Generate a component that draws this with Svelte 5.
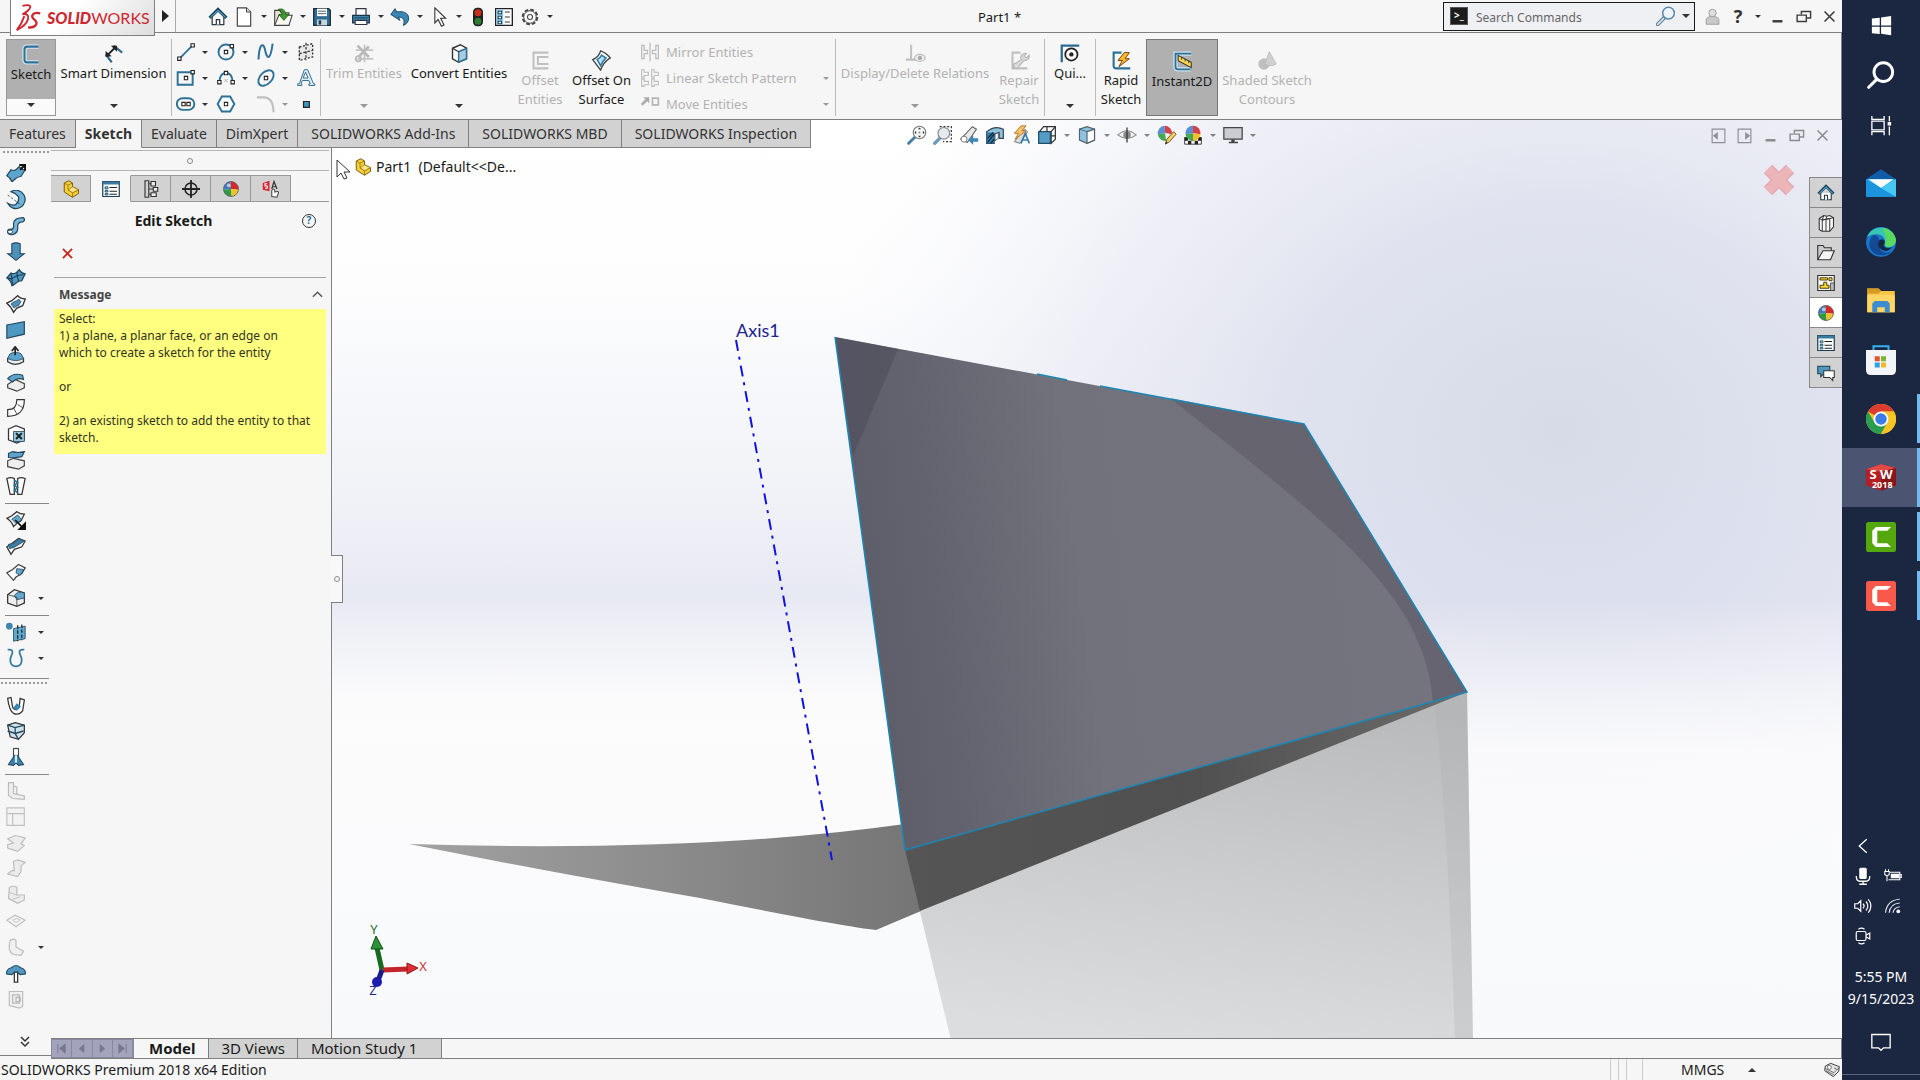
<script>
  const icons = {
    home: '<path d="M5 12v9h14v-9" fill="#fff" stroke="#2b3a44" stroke-width="1.5"/><path d="M10 21v-6h4v6" fill="#fff" stroke="#2b3a44" stroke-width="1.5"/><path d="M2 13 12 3l10 10" fill="none" stroke="#1c4257" stroke-width="4"/><path d="M3 12.500 12 4l9 8.500" fill="none" stroke="#4d9bc4" stroke-width="1.500"/>',
    doc: '<path d="M4 1h11l5 5v17H4z" fill="#fff" stroke="#444" stroke-width="1.4"/><path d="M15 1v5h5" fill="#ddd" stroke="#444" stroke-width="1.2"/>',
    open: '<path d="M2 22V4h6l2 3h9v15z" fill="#e6e3d3" stroke="#444" stroke-width="1.3"/><path d="M2 22 7 10h16l-4 12z" fill="#fbfaf2" stroke="#444" stroke-width="1.3"/><path d="M6 3c6-2 9 1 9 6h4l-6 7-6-7h4c0-3-1-5-5-6z" fill="#3d9a2f" stroke="#1f5c18"/>',
    save: '<path d="M2 2h18l2 2v18H2z" fill="#2f6a90" stroke="#1b2b38" stroke-width="1.5"/><path d="M6 2h12v9H6z" fill="#fff"/><path d="M7 5h10M7 8h10" stroke="#345" /><path d="M6 15h12v7H6z" fill="#c8d4dc"/><path d="M8 16h3v5H8z" fill="#1c3546"/>',
    print: '<path d="M6 10V2h12v8" fill="#fff" stroke="#334" stroke-width="1.400"/><path d="M2 10h20v9H2z" fill="#3f85ab" stroke="#183648" stroke-width="1.5"/><path d="M5 16h14v5H5z" fill="#fff" stroke="#334" stroke-width="1.300"/><path d="M4 13h16" stroke="#183648"/>',
    undo: '<path d="m1 9 5-7 2 4c10-2 16 3 14 10-1 3-3 5-6 6 2-5 1-10-6-10l2 4z" fill="#3a86b4" stroke="#1b4a67" stroke-width="1.2"/>',
    cursor: '<path d="M7 1v18l4-4 4 8 3-1.500-4-8h6z" fill="#fff" stroke="#333" stroke-width="1.3"/>',
    light: '<rect x="6" y="1" width="12" height="22" rx="5" fill="#222"/><circle cx="12" cy="7" r="4.200" fill="#c8301d"/><circle cx="12" cy="17" r="4.200" fill="#2e7d32"/>',
    props: '<path d="M2 2h20v20H2z" fill="#fff" stroke="#222" stroke-width="1.6"/><path d="M3 3h8v18H3z" fill="#8fc4e0"/><path d="M5 5h4v3H5zM5 11h4v3H5zM5 17h4v3H5z" fill="#fff" stroke="#1c4963" stroke-width="1.300"/><path d="M13 6h6M13 12h6M13 18h6" stroke="#333" stroke-width="1.4"/>',
    gear: '<circle cx="12" cy="12" r="8.500" fill="none" stroke="#444" stroke-width="3" stroke-dasharray="4.400 2.270"/><circle cx="12" cy="12" r="7.500" fill="#f8f8f8" stroke="#555" stroke-width="1.200"/><circle cx="12" cy="12" r="3" fill="#fff" stroke="#444" stroke-width="1.3"/>',
    user: '<path d="M3 23v-6q0-5 9-5t9 5v6z" fill="#c9c9c9" stroke="#8a8a8a"/><circle cx="12" cy="7" r="5.300" fill="#ddd" stroke="#8a8a8a"/>',
    min: '<path d="M5 17h14v3.500H5z" fill="#3c3c3c"/>',
    restore: '<path d="M9 9V5h13v9h-5" fill="none" stroke="#3c3c3c" stroke-width="2"/><path d="M3 10h13v9H3z" fill="none" stroke="#3c3c3c" stroke-width="2"/>',
    close: '<path d="m5 5 14 14M19 5 5 19" stroke="#3c3c3c" stroke-width="2.200"/>',
    left: '<path d="M3 3h18v19H3z" fill="none" stroke="#444" stroke-width="1.600"/><path d="M11 7v11l-7-5.500z" fill="#444"/>',
    right: '<path d="M3 3h18v19H3z" fill="none" stroke="#444" stroke-width="1.600"/><path d="M13 7v11l7-5.500z" fill="#444"/>',
    mag: '<path d="m10 14-8 8" stroke="#5c7f98" stroke-width="4.500" stroke-linecap="round"/><path d="m9 15-7 7" stroke="#dce8f0" stroke-width="2" stroke-linecap="round"/><circle cx="15" cy="8.500" r="7" fill="#edf5fb" stroke="#5c87a6" stroke-width="1.800"/>',
    sketch: '<path d="M20 3H7Q4 3 4 6v12q0 3 3 3h13" fill="none" stroke="#d6e6ef" stroke-width="5"/><path d="M20 3H7Q4 3 4 6v12q0 3 3 3h13" fill="none" stroke="#2d7197" stroke-width="2.300"/>',
    dimension: '<path d="m3 13 7 9M12 3l10 8" stroke="#2d6c90" stroke-width="2.400" fill="none"/><path d="m6 13 7-7" stroke="#222" stroke-width="2.200"/><path d="M3 9v7l7-1zM9 3h7v7z" fill="#222"/>',
    line: '<path d="M5 19 19 5" stroke="#2d7197" stroke-width="2.200"/><path d="M2 18h4v4H2zM18 2h4v4h-4z" fill="#fff" stroke="#222" stroke-width="1.300"/>',
    circle: '<circle cx="12" cy="12" r="9" fill="none" stroke="#2d7197" stroke-width="2.300"/><path d="M10 10h4v4h-4zM17 3h4v4h-4z" fill="#fff" stroke="#222" stroke-width="1.300"/>',
    spline: '<path d="M3 21C4 1 9 0 11 10s6 14 9-8" fill="none" stroke="#2d7197" stroke-width="2.400"/>',
    plane: '<path d="m4 6 16-4v16L4 22z" fill="#e8e8e8" stroke="#333" stroke-width="1.600" stroke-dasharray="2.500 2"/><path d="M12 1v21M4 14l16-4" stroke="#333" stroke-width="1.500" stroke-dasharray="3 2"/>',
    rect: '<path d="M2 5h18v15H2z" fill="none" stroke="#2d7197" stroke-width="2.300"/><path d="M10 10h4v4h-4zM18 3h4v4h-4z" fill="#fff" stroke="#222" stroke-width="1.300"/>',
    arc: '<path d="M4 16q1-10 8-10t8 10" fill="none" stroke="#2d7197" stroke-width="2.300"/><path d="M2 15h4v4H2zM18 15h4v4h-4zM10 4h4v4h-4z" fill="#fff" stroke="#222" stroke-width="1.300"/><path d="m10 13 4 4M14 13l-4 4" stroke="#aaa"/>',
    ellipse: '<ellipse cx="12" cy="12" rx="11" ry="7" transform="rotate(-45 12 12)" fill="none" stroke="#2d7197" stroke-width="2.300"/><path d="M10 10h4v4h-4z" fill="#fff" stroke="#222" stroke-width="1.300"/>',
    letter: '<path d="M2 21h5v-2H6l1.500-4h8l1.500 4h-1.500v2h7v-2h-1.500L14 2h-4L4 19H2zM8.500 12l3-7 3 7z" fill="#dcecf5" stroke="#3b7191" stroke-width="1.200" fill-rule="evenodd"/>',
    slot: '<rect x="1" y="5" width="21" height="14" rx="7" fill="none" stroke="#2d7197" stroke-width="2.300"/><path d="M7 10h4v4H7zM13 10h4v4h-4z" fill="#fff" stroke="#222" stroke-width="1.300"/>',
    hexagon: '<path d="m7 3-5 9 5 9h10l5-9-5-9z" fill="#fff" stroke="#2d7197" stroke-width="2.300"/><path d="M10 10h4v4h-4z" fill="#fff" stroke="#222" stroke-width="1.300"/>',
    fillet: '<path d="M1 4h8q12 0 12 18" fill="none" stroke="#c0c0c0" stroke-width="2.500"/>',
    point: '<path d="M9 9h7v7H9z" fill="#3f94c0" stroke="#222" stroke-width="1.400"/>',
    trim: '<path d="M12 2v20M2 8h20M4 18h18" stroke="#c4c4c4" stroke-width="2"/><path d="m4 3 13 13M5 16 17 4" stroke="#b8b8b8" stroke-width="3"/><circle cx="5" cy="18" r="3" fill="none" stroke="#bbb" stroke-width="2"/>',
    convert: '<path d="m4 6 9-4 7 4v12l-9 4-7-4z" fill="#fff" stroke="#333" stroke-width="1.600"/><path d="m11 10 9-4v12l-9 4z" fill="#a9cce0" stroke="#2d6c90" stroke-width="1.600"/><path d="m4 6 7 4" stroke="#333" stroke-width="1.500"/>',
    offset: '<path d="M21 3H4v18h17M21 8H9v8h12" fill="none" stroke="#c0c0c0" stroke-width="2.300"/>',
    surface: '<path d="M2 11Q9 8 11 1q6 2 11 8-8 5-11 14z" fill="#f8f8f8" stroke="#444" stroke-width="1.600"/><path d="M7 11q4-2 5-5l5 3q-4 4-6 9z" fill="#bfe0ef" stroke="#2d7da3" stroke-width="1.800"/>',
    mirror: '<path d="M12 1v22" stroke="#bbb" stroke-width="1.500"/><path d="M2 4h3v6h4v4H5v6H2zM22 4h-3v6h-4v4h4v6h3z" fill="none" stroke="#bbb" stroke-width="1.500"/>',
    pattern: '<path d="M2 2h3v3h5v4H5v2H2zM14 2h3v3h5v4h-5v2h-3zM2 13h3v3h5v4H5v2H2zM14 13h3v3h5v4h-5v2h-3z" fill="none" stroke="#bbb" stroke-width="1.300"/>',
    move: '<path d="m2 13 7-7" stroke="#aaa" stroke-width="3"/><path d="M4 4h7v7z" fill="#aaa"/><path d="M15 5h7v8h-7z" fill="none" stroke="#b5b5b5" stroke-width="2"/>',
    relations: '<path d="M7 2v17M1 19h12" stroke="#c0c0c0" stroke-width="2.300"/><ellipse cx="17" cy="17" rx="6" ry="4" fill="#eee" stroke="#bbb" stroke-width="1.400"/><circle cx="17" cy="17" r="2.500" fill="#aaa"/>',
    repair: '<path d="M21 21H4V3h9" fill="none" stroke="#c0c0c0" stroke-width="2.400"/><path d="M20 4a5 5 0 0 0-6 7l-6 4a3 3 0 1 0 3 4l6-7a5 5 0 0 0 6-6l-3 3-3-2z" fill="#ddd" stroke="#b5b5b5" stroke-width="1.300"/>',
    quick: '<path d="M2 22V3h20" fill="none" stroke="#2d6c90" stroke-width="2.600"/><circle cx="13" cy="13" r="7" fill="#fff" stroke="#222" stroke-width="2"/><circle cx="13" cy="13" r="2.500" fill="#222"/>',
    rapid: '<path d="M12 3H3v15q0 3 3 3h16" fill="none" stroke="#2d7197" stroke-width="2.400"/><path d="m15 3-7 9h5l-4 7 12-9h-5l5-7z" fill="#ffb928" stroke="#713f12" stroke-width="1.100"/>',
    instant: '<path d="M22 3H4v15q0 3 3 3h14" fill="none" stroke="#c9e2ef" stroke-width="5"/><path d="M22 3H4v15q0 3 3 3h14" fill="none" stroke="#2d7197" stroke-width="2"/><path d="m7 5 15 8v6L7 11z" fill="#ffd84a" stroke="#333" stroke-width="1.200"/><path d="M11 7v3M15 9v3M19 11v3" stroke="#333"/>',
    shaded: '<circle cx="8" cy="16" r="6.500" fill="#bfbfbf"/><path d="m14 2 8 14q-7 4-13 0z" fill="#cfcfcf" stroke="#bbb"/>',
    zoomfit: '<path d="m10 14-8 8" stroke="#447fa3" stroke-width="3.500" stroke-linecap="round"/><circle cx="15" cy="9" r="7.500" fill="#f7fafc" stroke="#777" stroke-width="1.400"/><path d="m15 3 2 2h-4zM15 15l2-2h-4zM9 9l2-2v4zM21 9l-2-2v4z" fill="#333"/><path d="M14 8h2v2h-2z" fill="#777"/>',
    zoomarea: '<path d="M8 2h14v18H12" fill="none" stroke="#333" stroke-width="1.500" stroke-dasharray="2.500 2"/><path d="m9 15-7 7" stroke="#6c9cba" stroke-width="4" stroke-linecap="round"/><circle cx="13" cy="10" r="7" fill="#e6ebf2" stroke="#888" stroke-width="1.400"/>',
    prev: '<path d="m2 17 14-15 5 3L10 21z" fill="#e8e8e8" stroke="#666" stroke-width="1.300"/><circle cx="6" cy="17" r="3.600" fill="#fff" stroke="#666"/><path d="M23 16h-6v-4l-6 6 6 6v-4h6z" fill="#3d86b1"/>',
    section: '<path d="M2 8q10-8 20-3v11h-5V9l-6 2v11H2z" fill="#8fc0dc" stroke="#345" stroke-width="1.400"/><path d="M2 9h9v13H2z" fill="#2f7ba6"/><path d="m3 21 8-10M3 16l7-7M7 22l4-5" stroke="#123" stroke-width="1.400"/><path d="M12 11 16 9v7l-4 3z" fill="#fff" stroke="#345"/>',
    views: '<path d="m4 20 12-15 4 3-9 14z" fill="#ddd" stroke="#666"/><path d="m12 1-8 9h5l-4 7L18 7h-5l5-6z" fill="#ffc36a" stroke="#a86a1a"/><path d="m12 22 5-12 5 12M14 18h6" stroke="#3a7ca5" stroke-width="2" fill="none"/>',
    orient: '<path d="M8 2h14v15l-5 5V8H3z" fill="#fff" stroke="#333" stroke-width="1.500"/><path d="M2 8h14v14H2z" fill="#559cc4" stroke="#204e69" stroke-width="1.500"/><path d="M17 8l5-6M12 2v6M17 13h5" stroke="#333" stroke-width="1.500"/>',
    display: '<path d="m3 5 9-3 9 3v13l-9 4-9-4z" fill="#8cc3e2" stroke="#52616b" stroke-width="1.400"/><path d="m12 8 9-3v13l-9 4z" fill="#fff" stroke="#52616b" stroke-width="1.400"/><path d="m3 5 9 3" stroke="#52616b"/>',
    eye: '<path d="M1 12Q12 2 23 12 12 20 1 12z" fill="#f5f5f5" stroke="#999" stroke-width="1.400"/><circle cx="12" cy="12" r="4.500" fill="#888"/><path d="M12 3v18" stroke="#333" stroke-width="1.500"/>',
    ball: '<circle cx="12" cy="12" r="10" fill="#f0f0f0"/><path d="M12 12 11 2A10 10 0 0 1 22 13z" fill="#d62828"/><path d="M12 12 11 2A10 10 0 0 0 2 13z" fill="#4178c0"/><path d="M12 12 2 13a10 10 0 0 0 11 9z" fill="#2f9a45"/><path d="m12 12 10 1a10 10 0 0 1-9 9z" fill="#f2c22c"/><circle cx="12" cy="12" r="10" fill="none" stroke="#555"/><circle cx="9" cy="7" r="2.500" fill="#fff" opacity=".6"/>',
    appearance: '<path d="M10 10 9 1a9 9 0 0 1 9 10z" fill="#d6404a"/><path d="M10 10 9 1a9 9 0 0 0-8 10z" fill="#5b8fd0"/><path d="M10 10 1 11a9 9 0 0 0 10 8z" fill="#45a857"/><path d="m10 10 8 1q0 7-7 8z" fill="#eee"/><path d="m10 23 2-6 8-9 3 3-8 9z" fill="#f0cf6a" stroke="#7a5a18" stroke-width="1.200"/><path d="m10 23 1-3 2 1z" fill="#222"/>',
    scenery: '<path d="M2 15h20v8H2z" fill="#fff" stroke="#222"/><path d="M2 15h4v4H2zM18 15h4v4h-4zM6 19h4v4H6zM14 19h4v4h-4zM10 15h4v4h-4z" fill="#222"/><path d="M12 10V1a9 9 0 0 1 9 10z" fill="#d6404a"/><path d="M12 10V1a9 9 0 0 0-9 10z" fill="#5b8fd0"/><path d="m12 10-9 1a9 9 0 0 0 9 8z" fill="#45a857"/><path d="m12 10 9 1a9 9 0 0 1-9 8z" fill="#f2c22c"/>',
    monitor: '<path d="M1 3h22v14H1z" fill="#c9cdd2" stroke="#444" stroke-width="1.500"/><path d="M10 17h4v3h4v2H7v-2h3z" fill="#444"/>',
    part: '<path d="m3 4 6-3 5 3v5l8 4v5l-8 5L3 16z" fill="#f7cf35" stroke="#6b5210" stroke-width="1.200"/><path d="m3 4 5 3 6-3M8 7v6l6 4 8-4M14 17v6" stroke="#8c6c15" fill="none"/><path d="m8 13 6-4 8 4-8 4z" fill="#ffe680" stroke="#8c6c15"/>',
    list: '<path d="M1 2h22v20H1z" fill="#fff" stroke="#1c3c50" stroke-width="1.600"/><path d="M1 2h22v4H1z" fill="#3b7ba0"/><path d="M4 9h4v3H4zM4 14h4v2H4zM4 18h4v2H4z" fill="#88bede" stroke="#1c4963"/><path d="M10 10h10M10 15h10M10 19h10" stroke="#222" stroke-width="1.500"/>',
    config: '<path d="M4 1h5v22H4zM9 5h4M9 12h6M9 19h3" fill="none" stroke="#333" stroke-width="1.500"/><path d="M12 2h6v6h-6zM15 10h6v5h-6zM12 17h7v5h-7z" fill="#eee" stroke="#333" stroke-width="1.500"/>',
    target: '<circle cx="12" cy="12" r="8" fill="none" stroke="#222" stroke-width="2"/><path d="M12 0v24M0 12h24" stroke="#222" stroke-width="2.400"/>',
    cam: '<path d="M1 4 10 1v14l-9-2z" fill="#d5232f"/><path d="M7 5H4v3h3v3H4" stroke="#fff" stroke-width="1.500" fill="none"/><path d="m13 12 3-10 4 10M14 9h5" stroke="#333" stroke-width="1.600" fill="none"/><path d="M13 22v-8q3-4 4 0v2q5-2 5 1l-2 6z" fill="#fff" stroke="#444" stroke-width="1.400"/>',
    boundary: '<path d="m1 14 5-7q4 2 7-1l3-3q2 4 7 4l-5 8q-4 0-7 3t-4 3q-2-5-6-7z" fill="#5da4cd" stroke="#25485d" stroke-width="1.400"/><path d="M16 1h7v7M23 1l-6 6" stroke="#111" stroke-width="2.500" fill="none"/>',
    sheet: '<path d="m1 12 5-6q4 2 7-1l3-3q2 4 7 5l-4 8q-4 0-7 3t-5 3q-1-6-6-9z" fill="#4f98c2" stroke="#25485d" stroke-width="1.500"/><path d="m6 6 1 7 1 7M13 5l1 6 1 5M2 12q4 2 8-1t11-3" stroke="#1d3b4e" fill="none" stroke-width="1.300"/>',
    revolve: '<path d="M6 2a11 11 0 1 1-4 14q6 4 10 1t3-9q-3-4-9-6z" fill="#6fb3d9" stroke="#25485d" stroke-width="1.500"/><path d="m2 6 15 11" stroke="#25485d" stroke-dasharray="3 2"/>',
    sweep: '<path d="M2 20q-1-5 5-4 3-1 2-7 1-7 12-7 3 3-1 5-6 0-6 5 1 8-5 10-6 1-7-2z" fill="#78b8da" stroke="#25485d" stroke-width="1.500"/><ellipse cx="5" cy="19" rx="3" ry="2" fill="#fff" stroke="#25485d"/>',
    loft: '<path d="M7 2q5-2 10 0v12h5l-10 8-10-8h5z" fill="#4b91ba" stroke="#25485d" stroke-width="1.300"/>',
    fillsurf: '<path d="m1 11 6-3 7-6q3 4 9 4l-3 8-7 3-4 5q-2-6-8-11z" fill="#fff" stroke="#333" stroke-width="1.600"/><path d="m6 12 4-3q3 0 5-3l3 3-3 5q-4 0-5 3z" fill="#4f93bb" stroke="#25485d"/>',
    flat: '<path d="m1 6 21-4v15L1 22z" fill="#4f98c2" stroke="#25485d" stroke-width="1.400"/>',
    extrude: '<path d="M2 14v5q9 6 19 0v-5" fill="#eee" stroke="#333" stroke-width="1.500"/><path d="M2 15q2-7 6-7h7q4 0 6 7-9 5-19 0z" fill="#5da4cd" stroke="#25485d"/><path d="M11 11V3M7 6l4-5 4 5" stroke="#222" stroke-width="2" fill="none"/>',
    freeform: '<path d="m2 15 9-6 11 5v5l-9 4-11-4z" fill="#eee" stroke="#444" stroke-width="1.400"/><path d="M2 8q7-8 18-4l1 5q-8-3-13 3z" fill="#5da4cd" stroke="#25485d" stroke-width="1.300"/>',
    ruled: '<path d="M13 2h9q0 20-20 20v-8q11 0 11-12z" fill="#fff" stroke="#333" stroke-width="1.400"/><path d="m14 8 7 4M9 12l4 7" stroke="#333"/>',
    deleteface: '<path d="m3 6 9-4 10 4v13l-9 4-10-4z" fill="#fff" stroke="#333" stroke-width="1.500"/><path d="M9 9h13v12H9z" fill="#9cc6dd" stroke="#25485d"/><path d="m12 11 7 7M19 11l-7 7" stroke="#122" stroke-width="2.400"/>',
    replace: '<path d="m2 13 7-3 13 3v6l-7 4-13-3z" fill="#eee" stroke="#444" stroke-width="1.400"/><path d="M3 9V4l5-2q6 2 14 0l-3 6q-8 2-16 1z" fill="#5da4cd" stroke="#25485d" stroke-width="1.400"/>',
    knit: '<path d="M1 3q5-2 9 0v19H5zM23 3q-5-2-9 0v19h5z" fill="#fff" stroke="#333" stroke-width="1.500"/><path d="m10 5 4 3-4 3 4 3-4 3 4 3" stroke="#2d7197" stroke-width="2" fill="none"/>',
    trimsurf: '<path d="m1 10 6-3 6-5q4 3 9 3l-4 8-5 3-4 4q-2-6-8-10z" fill="#f5f5f5" stroke="#333" stroke-width="1.500"/><path d="m7 11 7-5 5 6-7 4z" fill="#62a6cc" stroke="#25485d"/><path d="m11 12 10 10M23 16v7h-7z" fill="#111" stroke="#111" stroke-width="2"/>',
    extend: '<path d="m1 13 6-4 8-6 8 3-4 7-9 3-4 6z" fill="#fff" stroke="#333" stroke-width="1.500"/><path d="m3 10 6-1 7-6 6 3-6 4-7 4-5 1z" fill="#3a7da6" stroke="#25485d"/>',
    patch: '<path d="m1 13 7-4 7-6 8 4-4 7-7 4-3 4z" fill="#fff" stroke="#444" stroke-width="1.500"/><path d="m13 8 8 1-4 7-5-3z" fill="#63a8cf" stroke="#25485d"/>',
    thicken: '<path d="m2 8 8-6 12 4v12l-9 4-11-4z" fill="#eee" stroke="#333" stroke-width="1.500"/><path d="M10 9q4-6 12-3v6l-9 2z" fill="#63a8cf" stroke="#25485d"/><path d="m2 8 11 3v11" fill="none" stroke="#444"/>',
    refgeo: '<circle cx="4" cy="5" r="4" fill="#3d86b1"/><path d="m9 8 14-3v15L9 23z" fill="#5fa9d2" stroke="#25485d"/><path d="M14 4v19M19 3v19" stroke="#222" stroke-dasharray="4 2" stroke-width="1.500"/>',
    curve: '<path d="M2 2q8-1 5 6c-4 8-1 14 5 14s9-6 5-14q-3-7 5-6" fill="none" stroke="#3c7ba0" stroke-width="2.200"/>',
    bend: '<path d="m2 4 4-1 2 12q5 6 8-2l1-9 5 2-2 13q-5 6-11 3-5-3-7-18z" fill="#fff" stroke="#333" stroke-width="1.500"/><path d="m13 10 5 4-5 5-4-4z" fill="#3a86b4"/>',
    box: '<path d="m2 5 9-3 11 3v9l-7 8-10-3z" fill="#cfe3ee" stroke="#333" stroke-width="1.500"/><path d="m2 5 9 3 11-3M11 8v7l4 7M2 12l9 3 10-3" fill="none" stroke="#25485d" stroke-width="1.600"/>',
    flare: '<path d="M9 2q3-1 6 0v10l6 9-6 1-3-3-3 3-6-1 6-9z" fill="#3a86b4" stroke="#25485d" stroke-width="1.300"/><path d="M9 2h6v8H9z" fill="#fff" stroke="#333"/><path d="M12 10v9" stroke="#fff" stroke-width="2"/>',
    d1: '<path d="M3 2h6v13l13 3v4l-14-1-5-4zM9 6l4 1v9" fill="#eee" stroke="#bbb" stroke-width="1.400"/>',
    d2: '<path d="M1 1h21v21H1zM1 8h21M8 8v14" fill="#f3f3f3" stroke="#c0c0c0" stroke-width="1.400"/>',
    d3: '<path d="m2 7 9-4 12 3-5 7 4 2-8 7-12-4v-4l7-2z" fill="#ececec" stroke="#bcbcbc" stroke-width="1.400"/>',
    d4: '<path d="m9 3 5-2 9 3-5 4v7l-4 6-12-3 5-4h3z" fill="#ececec" stroke="#bcbcbc" stroke-width="1.400"/>',
    d5: '<path d="M4 3q5-3 9 0v9h9v6l-8 4L3 16z" fill="#ececec" stroke="#bcbcbc" stroke-width="1.400"/><path d="m4 9 9 3M8 17l9-3" stroke="#bcbcbc"/>',
    d6: '<path d="m1 11 10-6 12 6-11 8z" fill="#f4f4f4" stroke="#bcbcbc" stroke-width="1.400"/><path d="m8 11 5-2 4 2-5 3z" fill="none" stroke="#bcbcbc"/>',
    d7: '<path d="M5 4q5-3 7 0v8l9 5-3 5-9-1q-8-4-4-17z" fill="#f0f0f0" stroke="#bcbcbc" stroke-width="1.400"/>',
    dome: '<path d="M0 13q2-7 6-7 6-6 12 0 4 0 6 7l-7 1q-5-5-10 0z" fill="#4f9ac5" stroke="#25485d" stroke-width="1.400"/><path d="M10 11h4v12h-4z" fill="#fff" stroke="#333" stroke-width="1.500"/>',
    d8: '<path d="M4 3h16v18l-4 2-12-3z" fill="#f0f0f0" stroke="#bcbcbc" stroke-width="1.400"/><path d="M8 7h8v10H8zM12 10h5v5h-5z" fill="none" stroke="#b5b5b5" stroke-width="1.400"/>',
    books: '<path d="m3 6 6-4 4 1 4-1 5 3v12l-5 6H7l-4-2z" fill="#f6f6f6" stroke="#333" stroke-width="1.400"/><path d="m3 6 4 2v15M9 2 7 8l5-1v16M13 3l-1 4 5-1v17M7 8l5-1 5-1 5-1" fill="none" stroke="#333" stroke-width="1.300"/>',
    folder: '<path d="M1 21V2h7l2 3h9v4" fill="#ccc" stroke="#333" stroke-width="1.500"/><path d="m1 21 7-12h15l-5 12z" fill="#f5f5f5" stroke="#333" stroke-width="1.500"/>',
    palette: '<path d="M1 2h22v20H1z" fill="#fff" stroke="#333" stroke-width="1.600"/><path d="M4 5h10v3H4zM16 5h4v4h-4zM9 11h4v4h3v4H4v-4h5z" fill="#f7d631" stroke="#4a3d05" stroke-width="1.300"/><path d="M18 12h5v10h-5z" fill="#bbb" stroke="#333"/>',
    chat: '<path d="M1 3h16v10H9l-4 4v-4H1z" fill="#4e97c0" stroke="#204052" stroke-width="1.400"/><path d="M9 9h14v9h-2v4l-4-4H9z" fill="#fff" stroke="#333" stroke-width="1.400"/>',
    windows: '<path d="m1 4 9-1v9H1zM11.500 2.800 23 1v11H11.500zM1 13.300h9v8.500l-9-1zM11.500 13.300H23V23l-11.500-1.500z" fill="#fff"/>',
    search: '<circle cx="14" cy="9.500" r="8" fill="none" stroke="#fff" stroke-width="2.500"/><path d="m8.500 15.500-7 7" stroke="#fff" stroke-width="2.700" stroke-linecap="round"/>',
    taskview: '<path d="M1 1v4h14V1M1 23v-4h14v4M1 7h14v10H1zM21 1v6M21 13v10" fill="none" stroke="#fff" stroke-width="1.500"/><path d="M19 8h4v4h-4z" fill="#fff"/>',
    mail: '<path d="M0 9 12 1l12 8-12 7z" fill="#0f5ca8"/><path d="M0 9h24v14H0z" fill="#32b4ee"/><path d="M2 9h20l-10 7z" fill="#fff"/><path d="m0 9 24 14H0z" fill="#1c93dd"/><path d="m12 16 12-7v14z" fill="#46c8f5"/>',
    edge: '<circle cx="12" cy="12" r="12" fill="#1b75c9"/><path d="M1 8C4-2 21-3 24 10c0 7-9 8-9 4 2-9-9-10-14-6z" fill="#38c6b4"/><path d="M13 1c7 0 11 6 11 10-1 6-9 6-9 3 2-4 1-8-2-13z" fill="#5bd85e"/><path d="M5 7c-8 12 6 20 15 13-7 2-11-2-9-9-2-5-4-5-6-4z" fill="#124b94"/><path d="M10 12q1-3 4-2 2 2 0 5 2 3 7 1-5 6-10 1-2-2-1-5z" fill="#132749"/>',
    explorer: '<path d="M1 2h9l2 2h11v17H1z" fill="#f9c546"/><path d="M1 2h9l2 2-2 2H1z" fill="#d69a21"/><path d="M1 7h22v14H1z" fill="#ffd563"/><path d="M5 21v-7l2-2h10l2 2v7h-4v-4H9v4z" fill="#3e8cd0"/>',
    store: '<path d="M6 5V1h12v4" fill="none" stroke="#36b1ee" stroke-width="1.600"/><path d="M0 4h24v16q0 4-4 4H4q-4 0-4-4z" fill="#f4f5f8"/><path d="M7 9h4v4H7z" fill="#e6522c"/><path d="M12 9h4v4h-4z" fill="#7db52e"/><path d="M7 14h4v4H7z" fill="#2ba3e6"/><path d="M12 14h4v4h-4z" fill="#f5b92b"/>',
    chrome: '<circle cx="12" cy="12" r="12" fill="#f7c325"/><path d="M12 12 1.600 6A12 12 0 0 1 22.400 6H12z" fill="#dc3d30"/><path d="M1.600 6A12 12 0 0 0 12 24l5-9-5-3-5 3z" fill="#2b9d50"/><path d="M12 6h10.400A12 12 0 0 1 12 24l5.200-9z" fill="#f7c325"/><circle cx="12" cy="12" r="6" fill="#fff"/><circle cx="12" cy="12" r="4.600" fill="#3c7ce8"/>',
    green: '<rect width="24" height="24" rx="2" fill="#54a80d"/><path d="M20 4H8L5 7v10l3 3h12l-3-3H9V7h8z" fill="#fff"/>',
    red: '<rect width="24" height="24" rx="2" fill="#f9594a"/><path d="M20 4H8L5 7v10l3 3h12l-3-3H9V7h8z" fill="#fff"/>',
    sw: '<path d="m0 5 12-4 12 3v14l-12 4-12-4z" fill="#b41f24"/><path d="m0 5 12-4 12 3-12 3z" fill="#e34a45"/><path d="m12 7 12-3v14l-12 4z" fill="#87151a"/>',
    chevron: '<path d="M17 3 7 12l10 9" fill="none" stroke="#fff" stroke-width="1.700"/>',
    mic: '<rect x="7" y="1" width="10" height="15" rx="2" fill="#fff"/><path d="M3 12q0 7 5 7h8q5 0 5-7M12 19v4M7 23h10" fill="none" stroke="#fff" stroke-width="1.700"/>',
    battery: '<path d="M8 7h13v10H6M21 10h2v4h-2" fill="none" stroke="#fff" stroke-width="1.500"/><path d="M9 9h11v6H9z" fill="#fff"/><path d="M2 3v3M6 3v3M1 6h6v4l-3 2-3-2zM4 12v7" fill="none" stroke="#fff" stroke-width="1.400"/>',
    sound: '<path d="M1 9h4l4-4v14l-4-4H1zM12 9q3 3 0 6M16 6q5 6 0 12M19 3q7 9 0 18" fill="none" stroke="#fff" stroke-width="1.600"/>',
    wifi: '<path d="M2 21Q4 4 21 3M7 21Q8 9 21 8M12 21q1-7 9-8" fill="none" stroke="#dce2ec" stroke-width="1.600"/><circle cx="19" cy="19" r="2.500" fill="#fff"/>',
    meet: '<rect x="3" y="6" width="13" height="12" rx="2" fill="none" stroke="#fff" stroke-width="1.600"/><path d="m16 11 5-3v8l-5-3M6 3q4-3 8 0M6 21q4 3 8 0" fill="none" stroke="#fff" stroke-width="1.600"/>',
    notify: '<path d="M1 3h22v16h-8l-3 3-3-3H1z" fill="none" stroke="#fff" stroke-width="1.600"/>',
    tag: '<path d="m2 6 8-4 13 5-1 7-8 8L1 13z" fill="#e6e6e6" stroke="#333" stroke-width="1.400"/><circle cx="8" cy="8" r="3" fill="#fff" stroke="#333"/><path d="m3 13 12 6M15 9l5 2M2 10l13 6 7-7" fill="none" stroke="#444"/>'
  };

  const quick = [['home', 'Home', false], ['doc', 'New', true], ['open', 'Open', true], ['save', 'Save', true], ['print', 'Print', true], ['undo', 'Undo', true], ['cursor', 'Select', true], ['light', 'Rebuild', false], ['props', 'File Properties', false], ['gear', 'Options', true]];

  const sketchTools = [
    ['line', true], ['circle', true], ['spline', true], ['plane', false],
    ['rect', true], ['arc', true], ['ellipse', true], ['letter', false],
    ['slot', true], ['hexagon', false], ['fillet', true], ['point', false]
  ];

  const listTools = [['mirror', 'Mirror Entities', false], ['pattern', 'Linear Sketch Pattern', true], ['move', 'Move Entities', true]];

  const tabs = ['Features', 'Sketch', 'Evaluate', 'DimXpert', 'SOLIDWORKS Add-Ins', 'SOLIDWORKS MBD', 'SOLIDWORKS Inspection'];
  let activeTab = $state('Sketch');

  const hud = [['zoomfit', false], ['zoomarea', false], ['prev', false], ['section', false], ['views', false], ['orient', true], ['display', true], ['eye', true], ['appearance', false], ['scenery', true], ['monitor', true]];

  const railGroups = [
    ['boundary', 'revolve', 'sweep', 'loft', 'sheet', 'fillsurf', 'flat', 'extrude', 'freeform', 'ruled', 'deleteface', 'replace', 'knit'],
    ['trimsurf', 'extend', 'patch', 'thicken+'],
    ['refgeo+', 'curve+'],
    ['bend', 'box', 'flare'],
    ['d1', 'd2', 'd3', 'd4', 'd5', 'd6', 'd7+', 'dome', 'd8']
  ];

  const panelTabs = ['part', 'list', 'config', 'target', 'ball', 'cam'];
  const paneTabs = ['home', 'books', 'folder', 'palette', 'ball', 'list', 'chat'];

  const studies = ['Model', '3D Views', 'Motion Study 1'];
  let activeStudy = $state('Model');

  const pinned = ['mail', 'edge', 'explorer', 'store', 'chrome', 'sw', 'green', 'red'];
  const running = ['chrome', 'sw', 'green', 'red'];
  let search = $state('');
</script>

{#snippet icon(name)}
  <svg viewBox="0 0 24 24" aria-hidden="true">{@html icons[name]}</svg>
{/snippet}

{#snippet caret()}
  <span class="caret"></span>
{/snippet}

{#snippet big(name, label, cls, arrow)}
  <button class="big {cls}">
    <span class="pic">{@render icon(name)}</span>
    <span class="label">{label}</span>
    {#if arrow}{@render caret()}{/if}
  </button>
{/snippet}

<div class="desktop">
  <main class="app">
    <header class="titlebar">
      <div class="logo">
        <svg class="ds" viewBox="0 0 28 32" aria-hidden="true">
          <path d="M7 3c8-2 11 0 6 5-2 2-4 3-6 4 10-2 8 10-6 17 4-5 6-9 8-15" fill="none" stroke="#cf2630" stroke-width="2" />
          <path d="M26 11c-8-2-11 3-6 7s0 9-7 8" fill="none" stroke="#cf2630" stroke-width="2.500" />
        </svg>
        <span><b>SOLID</b>WORKS</span>
      </div>
      <button class="more" aria-label="Show menu"></button>
      <nav class="quick">
        {#each quick as [name, label, arrow]}
          <button class="ic" aria-label={label}>{@render icon(name)}</button>
          {#if arrow}<button class="drop" aria-label="{label} options">{@render caret()}</button>{/if}
        {/each}
      </nav>
      <div class="doc-title">Part1 *</div>
      <div class="search">
        <span class="prompt">&gt;_</span>
        <input type="text" bind:value={search} placeholder="Search Commands" aria-label="Search Commands" />
        <button class="ic" aria-label="Search">{@render icon('mag')}</button>
        <button class="drop" aria-label="Search options">{@render caret()}</button>
      </div>
      <nav class="controls">
        <button class="ic" aria-label="Login">{@render icon('user')}</button>
        <button class="ic help">?</button>
        <button class="drop" aria-label="Help options">{@render caret()}</button>
        <button class="ic" aria-label="Minimize">{@render icon('min')}</button>
        <button class="ic" aria-label="Restore">{@render icon('restore')}</button>
        <button class="ic" aria-label="Close">{@render icon('close')}</button>
      </nav>
    </header>

    <section class="ribbon">
      {@render big('sketch', 'Sketch', 'w50 split', true)}
      {@render big('dimension', 'Smart Dimension', 'w115', true)}
      <i class="sep"></i>
      <div class="tools">
        {#each sketchTools as [name, arrow]}
          <button class:off={name == 'fillet'} aria-label={name}>{@render icon(name)}{#if arrow}{@render caret()}{/if}</button>
        {/each}
      </div>
      <i class="sep"></i>
      {@render big('trim', 'Trim Entities', 'w86 off', true)}
      {@render big('convert', 'Convert Entities', 'w104', true)}
      {@render big('offset', 'Offset Entities', 'w58 off low', false)}
      {@render big('surface', 'Offset On Surface', 'w65 low', false)}
      <div class="list">
        {#each listTools as [name, label, arrow]}
          <button class="off">{@render icon(name)}<span>{label}</span>{#if arrow}{@render caret()}{/if}</button>
        {/each}
      </div>
      <i class="sep"></i>
      {@render big('relations', 'Display/Delete Relations', 'w158 off', true)}
      {@render big('repair', 'Repair Sketch', 'w50 off low', false)}
      <i class="sep"></i>
      {@render big('quick', 'Qui...', 'w50', true)}
      <i class="sep"></i>
      {@render big('rapid', 'Rapid Sketch', 'w50 low', false)}
      {@render big('instant', 'Instant2D', 'w72 low pressed', false)}
      {@render big('shaded', 'Shaded Sketch Contours', 'w98 off low', false)}
    </section>

    <section class="workspace">
      <svg class="scene" viewBox="0 120 1842 939" preserveAspectRatio="none" aria-label="Model view">
        <defs>
          <linearGradient id="sky" x1="0" y1="0" x2="0" y2="1">
            <stop offset="0" stop-color="#c9cee2" stop-opacity="0" />
            <stop offset=".18" stop-color="#c9cee2" stop-opacity=".04" />
            <stop offset=".38" stop-color="#c9cee2" stop-opacity=".24" />
            <stop offset=".51" stop-color="#c4c9e0" stop-opacity=".4" />
            <stop offset=".58" stop-color="#cdd0e0" stop-opacity=".28" />
            <stop offset=".66" stop-color="#fff" stop-opacity="0" />
          </linearGradient>
          <radialGradient id="glow" gradientUnits="userSpaceOnUse" cx="0" cy="0" r="1" gradientTransform="translate(1560 430) scale(740 620)">
            <stop offset="0" stop-color="#d7dbe8" />
            <stop offset=".35" stop-color="#dcdfed" stop-opacity=".9" />
            <stop offset=".65" stop-color="#e5e7f2" stop-opacity=".6" />
            <stop offset="1" stop-color="#f4f5fa" stop-opacity="0" />
          </radialGradient>
          <linearGradient id="horizon" x1="0" y1="0" x2="0" y2="1">
            <stop offset="0" stop-color="#f8f8fa" stop-opacity="0" />
            <stop offset=".33" stop-color="#fbfbfc" stop-opacity=".9" />
            <stop offset="1" stop-color="#f8f9fb" />
          </linearGradient>
          <linearGradient id="face" x1="0" y1=".1" x2="1" y2="0">
            <stop offset="0" stop-color="#5e5e6b" />
            <stop offset=".12" stop-color="#63636f" />
            <stop offset=".35" stop-color="#71727c" />
            <stop offset="1" stop-color="#757480" />
          </linearGradient>
          <linearGradient id="shadow" x1="0" y1="0" x2="1" y2="0">
            <stop offset="0" stop-color="#a2a2a2" />
            <stop offset=".5" stop-color="#8c8c8c" />
            <stop offset="1" stop-color="#757575" />
          </linearGradient>
          <linearGradient id="mirror" x1=".6" y1="0" x2=".4" y2="1">
            <stop offset="0" stop-color="#b9babc" />
            <stop offset=".5" stop-color="#cbccce" />
            <stop offset="1" stop-color="#dcdddf" />
          </linearGradient>
          <linearGradient id="under" x1="0" y1="0" x2="1" y2="0">
            <stop offset="0" stop-color="#555" />
            <stop offset=".5" stop-color="#505050" />
            <stop offset="1" stop-color="#6b6b6b" />
          </linearGradient>
        </defs>
        <rect y="120" width="1842" height="939" fill="#fff" />
        <rect y="120" width="1842" height="939" fill="url(#sky)" />
        <rect y="120" width="1842" height="939" fill="url(#glow)" />
        <rect y="600" width="1842" height="459" fill="url(#horizon)" />
        <path d="M905 850 951 1040H1473L1467 692z" fill="url(#mirror)" />
        <path d="M1433 700Q1446 780 1455 1040H1473L1467 692z" fill="#a9aaad" opacity=".25" />
        <path d="M409 844Q700 853 905 824L921 911 876 930Q840 926 700 898 560 874 409 844z" fill="url(#shadow)" />
        <path d="M905 850 920 911 1467 692z" fill="url(#under)" />
        <path d="M835 337 1304 424 1467 692 905 850z" fill="url(#face)" />
        <path d="M835 337 898 349 853 456z" fill="#4a4a57" opacity=".5" />
        <path d="M1170 398C1270 478 1340 530 1384 586Q1428 640 1433 702L1467 692 1304 424z" fill="#5f5e6a" opacity=".7" />
        <path d="M835 337 905 850 1467 692 1304 424 1100 386M1067 380 1037 374" fill="none" stroke="#1b86b4" stroke-width="1.500" />
        <path d="m736 340 96 520" stroke="#1212dd" stroke-width="2" stroke-dasharray="11 6 3 6" />
        <text x="736" y="337" class="axis-name">Axis1</text>
        <path d="m382 970-5-22" stroke="#176b21" stroke-width="5" />
        <path d="m376 936-5 13h12z" fill="#2d9139" stroke="#125019" />
        <path d="m383 970 25-1" stroke="#c4232a" stroke-width="5" />
        <path d="m418 968-11-5v11z" fill="#e02d30" stroke="#8b1a1f" />
        <path d="m382 970-4 11" stroke="#1a1a8a" stroke-width="5" />
        <circle cx="377" cy="982" r="5" fill="#1c1cae" />
        <text x="374" y="934" class="triad green">Y</text>
        <text x="423" y="971" class="triad crimson">X</text>
        <text x="373" y="995" class="triad navy">Z</text>
        <path d="M337 160v17l4-4 3 6 3-1-3-6h6z" fill="#fff" stroke="#333" />
      </svg>

      <div class="tabrow">
        {#each tabs as tab}
          <button class="tab" class:wide={tab.startsWith('SOLIDWORKS')} class:active={tab == activeTab} onclick={() => (activeTab = tab)}>{tab}</button>
        {/each}
        <nav class="hud">
          {#each hud as [name, arrow]}
            <button class="ic" aria-label={name}>{@render icon(name)}</button>
            {#if arrow}<button class="drop" aria-label="{name} options">{@render caret()}</button>{/if}
          {/each}
        </nav>
        <nav class="doc-controls">
          {#each ['left', 'right', 'min', 'restore', 'close'] as name}
            <button class="ic" aria-label={name}>{@render icon(name)}</button>
          {/each}
        </nav>
      </div>

      <div class="below">
        <aside class="rail">
          <i class="dots"></i>
          {#each railGroups as group, i}
            {#if i > 0}<i class="rule" class:tall={i == 3}></i>{/if}
            {#each group as name}
              <button aria-label={name}>{@render icon(name.replace('+', ''))}{#if name.endsWith('+')}{@render caret()}{/if}</button>
            {/each}
          {/each}
          <button class="expand" aria-label="More tools">
            <svg viewBox="0 0 12 12"><path d="m2 1 4 4 4-4M2 6l4 4 4-4" fill="none" stroke="#333" stroke-width="1.500" /></svg>
          </button>
        </aside>

        <div class="center">
          <div class="stage">
            <aside class="panel">
              <div class="grip"><i></i></div>
              <div class="panel-tabs">
                {#each panelTabs as name}
                  <button class:active={name == 'list'} aria-label={name}>{@render icon(name)}</button>
                {/each}
              </div>
              <div class="panel-head">
                <h2>Edit Sketch</h2>
                <button class="ask" aria-label="Help">?</button>
              </div>
              <button class="cancel" aria-label="Cancel">
                <svg viewBox="0 0 12 12"><path d="m1 1 10 10M11 1 1 11" stroke="#c92a1d" stroke-width="2" /></svg>
              </button>
              <div class="message">
                <h3>Message
                  <svg viewBox="0 0 12 8"><path d="m1 7 5-5 5 5" fill="none" stroke="#555" stroke-width="1.500" /></svg>
                </h3>
                <p>Select:<br />1) a plane, a planar face, or an edge on<br />which to create a sketch for the entity<br /><br />or<br /><br />2) an existing sketch to add the entity to that<br />sketch.</p>
              </div>
              <button class="splitter" aria-label="Collapse panel"><i></i></button>
            </aside>

            <div class="viewport">
              <div class="tree">{@render icon('part')}<span>Part1&nbsp; (Default&lt;&lt;De...</span></div>
              <button class="reject" aria-label="Exit sketch">
                <svg viewBox="0 0 36 36"><path d="m7 7 22 22M29 7 7 29" stroke="#e3a9b2" stroke-width="12" /><path d="m7 7 22 22M29 7 7 29" stroke="#ecb5b8" stroke-width="9" /></svg>
              </button>
              <nav class="pane">
                {#each paneTabs as name, i}
                  <button class:active={i == 4} aria-label={name}>{@render icon(name)}</button>
                {/each}
              </nav>
            </div>
          </div>

          <div class="studies">
            <div class="steps">
              <button aria-label="First"><svg viewBox="0 0 12 12"><path d="M2 1v10M10 1v10L4 6z" fill="#77778f" stroke="#77778f" /></svg></button>
              <button aria-label="Previous"><svg viewBox="0 0 12 12"><path d="M9 1v10L3 6z" fill="#77778f" /></svg></button>
              <button aria-label="Next"><svg viewBox="0 0 12 12"><path d="M3 1v10l6-5z" fill="#77778f" /></svg></button>
              <button aria-label="Last"><svg viewBox="0 0 12 12"><path d="M10 1v10M2 1v10l6-5z" fill="#77778f" stroke="#77778f" /></svg></button>
            </div>
            {#each studies as study}
              <button class="study" class:active={study == activeStudy} onclick={() => (activeStudy = study)}>{study}</button>
            {/each}
          </div>
        </div>
      </div>
    </section>

    <footer class="status">
      <span class="edition">SOLIDWORKS Premium 2018 x64 Edition</span>
      <i></i><i></i><i></i><i class="wide"></i>
      <button class="units">MMGS <span class="caret up"></span></button>
      <button class="ic" aria-label="Tags">{@render icon('tag')}</button>
    </footer>
  </main>

  <aside class="taskbar">
    <button class="sys s21" aria-label="Start">{@render icon('windows')}</button>
    <button class="sys s28" aria-label="Search">{@render icon('search')}</button>
    <button class="sys s21" aria-label="Task View">{@render icon('taskview')}</button>
    <div class="pinned">
      {#each pinned as name}
        <button class:running={running.includes(name)} class:current={name == 'sw'} aria-label={name}>
          {@render icon(name)}
          {#if name == 'sw'}<span class="sw-name">S W<small>2018</small></span>{/if}
        </button>
      {/each}
    </div>
    <div class="tray">
      {#each ['chevron', '', 'mic', 'battery', 'sound', 'wifi', 'meet'] as name}
        {#if name}<button aria-label={name}>{@render icon(name)}</button>{:else}<span></span>{/if}
      {/each}
    </div>
    <div class="clock">5:55 PM<br />9/15/2023</div>
    <button class="notify" aria-label="Notifications">{@render icon('notify')}</button>
  </aside>
</div>

<style>
  :global(body) {
    background: #f6f6f6;
  }

  .desktop {
    display: flex;
    height: 100vh;
    overflow: hidden;
    font-family: "Noto Sans", "Open Sans", sans-serif;
    font-size: 13px;
    color: #1a1a1a;
  }

  .desktop :global(*) {
    box-sizing: border-box;
  }

  button {
    font: inherit;
    color: inherit;
    background: none;
    border: 0;
    padding: 0;
    margin: 0;
    border-radius: 0;
  }

  svg {
    display: block;
    flex: none;
  }

  .app {
    flex: 1;
    min-width: 0;
    display: flex;
    flex-direction: column;
    background: #f6f6f6;
  }

  .caret {
    width: 0;
    height: 0;
    border: 4px solid transparent;
    border-top-color: #333;
    border-bottom: 0;
  }

  .caret.up {
    display: inline-block;
    border-top: 0;
    border-bottom: 4px solid #333;
  }

  .ic {
    width: 26px;
    height: 26px;
    display: grid;
    place-items: center;
  }

  .ic svg {
    width: 20px;
    height: 20px;
  }

  .drop {
    width: 13px;
    height: 26px;
    display: grid;
    place-items: center;
  }

  .drop .caret {
    border-width: 3px;
    border-bottom: 0;
  }

  /* title bar */
  .titlebar {
    height: 33px;
    flex: none;
    display: flex;
    align-items: center;
    border-bottom: 1px solid #808080;
  }

  .logo {
    position: relative;
    z-index: 2;
    align-self: flex-start;
    width: 145px;
    height: 36px;
    margin-left: 10px;
    padding-left: 4px;
    display: flex;
    align-items: center;
    gap: 4px;
    flex: none;
    border: 1px solid #808080;
    border-top: 0;
    background: linear-gradient(135deg, #fff 40%, #ddd);
    color: #cf2630;
    font-family: Lato, "Noto Sans", sans-serif;
    font-size: 16px;
  }

  .logo b {
    font-weight: 900;
    font-style: italic;
  }

  .ds {
    width: 28px;
    height: 30px;
  }

  .more {
    width: 21px;
    height: 32px;
    border-right: 1px solid #aaa;
    display: grid;
    place-items: center;
  }

  .more::before {
    content: "";
    border: 6px solid transparent;
    border-left: 7px solid #222;
    border-right: 0;
  }

  .quick {
    display: flex;
    margin-left: 29px;
    padding-top: 1px;
  }

  .doc-title {
    flex: 1;
    padding-top: 2px;
    text-align: center;
  }

  .search {
    width: 252px;
    height: 29px;
    border: 1px solid #1a1a1a;
    background: #eef0f3;
    display: flex;
    align-items: center;
    padding: 0 2px 0 6px;
  }

  .search input {
    flex: 1;
    min-width: 0;
    border: 0;
    outline: 0;
    padding: 2px 0 0 8px;
    background: none;
    font: inherit;
    font-size: 12px;
  }

  .search input::placeholder {
    color: #666;
  }

  .search .drop .caret {
    border-width: 4px;
    border-bottom: 0;
  }

  .prompt {
    width: 18px;
    height: 18px;
    background: #1c1c1c;
    color: #fff;
    font-size: 10px;
    font-weight: bold;
    line-height: 15px;
    text-align: center;
    border: 1px solid #555;
  }

  .controls {
    display: flex;
    margin-left: 4px;
  }

  .controls .ic svg {
    width: 17px;
    height: 17px;
  }

  .help {
    font-size: 18px;
    font-weight: bold;
    color: #333;
  }

  /* ribbon */
  .ribbon {
    height: 87px;
    flex: none;
    display: flex;
    padding: 6px 0 3px 6px;
    border-bottom: 1px solid #808080;
    border-right: 1px solid #808080;
  }

  .sep {
    width: 1px;
    background: #bbb;
    flex: none;
  }

  .big {
    flex: none;
    display: flex;
    flex-direction: column;
    align-items: center;
    height: 77px;
    padding-top: 4px;
    line-height: 19px;
  }

  .big.low {
    padding-top: 11px;
  }

  .pic svg {
    width: 21px;
    height: 21px;
  }

  .big > .caret {
    margin-top: auto;
    margin-bottom: 8px;
  }

  .off {
    color: #b2b2b2;
  }

  .off .caret {
    border-top-color: #999;
  }

  .split {
    border: 1px solid #999;
    background: linear-gradient(#b0b0b0 59px, #fafafa 59px);
  }

  .pressed {
    background: #b0b0b0;
    border: 1px solid #777;
  }

  .w50 { width: 50px; }
  .w58 { width: 58px; }
  .w65 { width: 65px; }
  .w72 { width: 72px; }
  .w86 { width: 86px; }
  .w98 { width: 98px; }
  .w104 { width: 104px; }
  .w115 { width: 115px; }
  .w158 { width: 158px; }

  .tools {
    display: grid;
    grid-template-columns: 40px 40px 40px 28px;
    grid-auto-rows: 26px;
    padding-left: 4px;
    width: 148px;
  }

  .tools button {
    display: flex;
    align-items: center;
    gap: 6px;
  }

  .tools svg {
    width: 20px;
    height: 20px;
  }

  .tools .caret,
  .list .caret {
    border-width: 3px;
    border-bottom: 0;
  }

  .list {
    width: 201px;
    padding: 0 6px;
    display: grid;
    grid-auto-rows: 26px;
  }

  .list button {
    display: flex;
    align-items: center;
    gap: 6px;
  }

  .list svg {
    width: 20px;
    height: 20px;
  }

  .list .caret {
    margin-left: auto;
  }

  /* workspace */
  .workspace {
    position: relative;
    flex: 1;
    min-height: 0;
    display: flex;
    flex-direction: column;
  }

  .scene {
    position: absolute;
    width: 100%;
    height: 100%;
  }

  .axis-name {
    font-family: Lato, sans-serif;
    font-size: 18px;
    font-weight: 400;
    fill: #22228c;
  }

  .triad {
    font-size: 13px;
    text-anchor: middle;
  }

  .green { fill: #2b6f34; }
  .crimson { fill: #c4333a; }
  .navy { fill: #22228c; }

  .tabrow {
    position: relative;
    display: flex;
    height: 28px;
    flex: none;
  }

  .tab {
    padding: 0 9px;
    font-size: 14px;
    background: #d2d2d2;
    border-right: 1px solid #808080;
    border-bottom: 1px solid #808080;
    color: #333;
    white-space: nowrap;
  }

  .tab.wide {
    padding: 0 13px;
  }

  .tab.active {
    background: #f6f6f6;
    border-bottom-color: #f6f6f6;
    font-weight: bold;
  }

  .hud {
    display: flex;
    margin-left: 93px;
    padding-top: 2px;
  }

  .hud .drop {
    width: 14px;
    opacity: .6;
  }

  .doc-controls {
    display: flex;
    margin-left: auto;
    margin-right: 7px;
    padding-top: 2px;
    opacity: .55;
  }

  .doc-controls svg {
    width: 17px;
    height: 17px;
  }

  .below {
    position: relative;
    flex: 1;
    min-height: 0;
    display: flex;
  }

  .rail {
    width: 51px;
    flex: none;
    display: flex;
    flex-direction: column;
    padding-top: 3px;
    background: #f6f6f6;
  }

  .rail button {
    height: 26px;
    padding-left: 6px;
    display: flex;
    align-items: center;
    gap: 12px;
    flex: none;
  }

  .rail button svg {
    width: 20px;
    height: 20px;
  }

  .rail .caret {
    border-width: 3px;
    border-bottom: 0;
  }

  .dots {
    margin: 0 2px 8px 3px;
    border-top: 2px dotted #999;
  }

  .rule {
    height: 8px;
    flex: none;
    margin: 0 2px 0 5px;
    background: linear-gradient(#888, #888) center / 100% 1px no-repeat;
  }

  .rule.tall {
    height: 21px;
    margin-left: 0;
    background: radial-gradient(circle, #999 1px, transparent 1px) left 10px / 4px 4px repeat-x, linear-gradient(#888, #888) left 7px / 100% 1px no-repeat;
  }

  .rail .expand {
    margin-top: auto;
    height: 27px;
    padding: 0 0 0 19px;
    margin-bottom: 3px;
    border-bottom: 1px solid #808080;
  }

  .rail .expand svg {
    width: 12px;
    height: 12px;
  }

  .center {
    flex: 1;
    min-width: 0;
    display: flex;
    flex-direction: column;
  }

  .stage {
    flex: 1;
    min-height: 0;
    display: flex;
  }

  /* property panel */
  .panel {
    position: relative;
    width: 281px;
    flex: none;
    background: #f6f6f6;
    border-right: 1px solid #808080;
    padding-top: 2px;
  }

  .grip {
    height: 21px;
    margin-right: 2px;
    border: 1px solid #b5b5b5;
    border-width: 1px 0;
    display: grid;
    place-items: center;
  }

  .grip i,
  .splitter i {
    width: 6px;
    height: 6px;
    border: 1px solid #888;
    border-radius: 50%;
  }

  .panel-tabs {
    display: flex;
    height: 27px;
    margin: 4px 2px 0 0;
    border-bottom: 1px solid #999;
  }

  .panel-tabs button {
    width: 40px;
    height: 27px;
    display: grid;
    place-items: center;
    background: #d2d2d2;
    border: 1px solid #999;
    border-left: 0;
  }

  .panel-tabs .active {
    background: #f6f6f6;
    border-top-color: #f6f6f6;
    border-bottom-color: #f6f6f6;
  }

  .panel-tabs svg {
    width: 18px;
    height: 18px;
  }

  .panel-head {
    display: flex;
    align-items: center;
    height: 37px;
  }

  h2 {
    flex: 1;
    margin: 0;
    padding-right: 6px;
    text-align: center;
    font-size: 14px;
  }

  .ask {
    width: 14px;
    height: 14px;
    margin-right: 15px;
    border: 1px solid #333;
    border-radius: 50%;
    color: #2d6c90;
    font-size: 10px;
    font-weight: bold;
    line-height: 11px;
  }

  .cancel {
    display: block;
    margin: 9px 11px 18px;
  }

  .cancel svg {
    width: 11px;
    height: 11px;
  }

  .message {
    margin: 0 5px 0 3px;
    border-top: 1px solid #a5a5a5;
  }

  h3 {
    margin: 0;
    height: 31px;
    padding: 1px 3px 0 5px;
    display: flex;
    align-items: center;
    justify-content: space-between;
    font-size: 12px;
    color: #444;
  }

  h3 svg {
    width: 11px;
    height: 8px;
  }

  .message p {
    margin: 0;
    padding: 1px 5px 8px;
    background: #ffff80;
    line-height: 17px;
    font-size: 12px;
    color: #332;
    white-space: nowrap;
  }

  .splitter {
    position: absolute;
    left: 280px;
    top: calc(50% - 38px);
    width: 12px;
    height: 48px;
    z-index: 1;
    background: #f8f8f8;
    border: 1px solid #808080;
    border-left: 0;
    display: grid;
    place-items: center;
  }

  /* viewport overlays */
  .viewport {
    flex: 1;
    display: flex;
    align-items: flex-start;
  }

  .tree {
    display: flex;
    align-items: center;
    gap: 4px;
    height: 37px;
    margin-left: 22px;
    font-size: 14px;
  }

  .tree svg {
    width: 18px;
    height: 18px;
  }

  .reject {
    margin: 14px 12px 0 auto;
  }

  .reject svg {
    width: 36px;
    height: 36px;
  }

  .pane {
    width: 33px;
    margin-top: 29px;
    display: flex;
    flex-direction: column;
    border: 1px solid #888;
    border-width: 1px 0 0 1px;
  }

  .pane button {
    height: 30px;
    display: grid;
    place-items: center;
    background: #d2d2d2;
    border-bottom: 1px solid #888;
  }

  .pane .active {
    background: #fff;
  }

  .pane svg {
    width: 18px;
    height: 18px;
  }

  /* bottom tabs */
  .studies {
    display: flex;
    height: 21px;
    flex: none;
    background: #f6f6f6;
    border: 1px solid #808080;
    border-left: 0;
    font-size: 15px;
    line-height: 19px;
  }

  .steps {
    display: flex;
    width: 83px;
    background: #a3a3bc;
    border: 1px solid #8888a2;
  }

  .steps button {
    flex: 1;
    display: grid;
    place-items: center;
    border-right: 1px solid #8888a2;
  }

  .steps svg {
    width: 11px;
    height: 11px;
  }

  .study {
    padding: 0 12px;
    background: #d2d2d2;
    border-right: 1px solid #808080;
  }

  .study:last-child {
    padding: 0 24px 0 13px;
  }

  .study.active {
    padding: 0 13px 0 15px;
    background: #f6f6f6;
    font-weight: bold;
  }

  .status {
    height: 21px;
    flex: none;
    display: flex;
    align-items: center;
    padding-left: 1px;
    font-size: 14px;
  }

  .edition {
    flex: 1;
  }

  .status i {
    height: 21px;
    width: 8px;
    border-left: 1px solid #ccc;
  }

  .status .wide {
    margin-left: 8px;
    width: 39px;
  }

  .units {
    width: 140px;
    display: flex;
    align-items: center;
    gap: 24px;
  }

  .status .ic {
    width: 21px;
    height: 20px;
  }

  .status .ic svg {
    width: 16px;
    height: 16px;
  }

  /* windows taskbar */
  .taskbar {
    width: 78px;
    flex: none;
    display: flex;
    flex-direction: column;
    background: linear-gradient(#5b6579, #5b6579) bottom 5px left / 100% 1px no-repeat #1b2741;
    color: #fff;
  }

  .sys {
    height: 50px;
    display: grid;
    place-items: center;
  }

  .s21 svg {
    width: 21px;
    height: 21px;
  }

  .s28 svg {
    width: 28px;
    height: 28px;
  }

  .pinned {
    margin-top: 3px;
    display: grid;
    grid-auto-rows: 59px;
  }

  .pinned button {
    position: relative;
    display: grid;
    place-items: center;
  }

  .pinned svg {
    width: 30px;
    height: 30px;
  }

  .running::after {
    content: "";
    position: absolute;
    right: 0;
    top: 5px;
    bottom: 5px;
    width: 3px;
    background: #76b9ed;
  }

  .current {
    background: #4b5470;
  }

  .current::after {
    top: 0;
    bottom: 0;
  }

  .sw-name {
    position: absolute;
    top: 19px;
    font-size: 13px;
    font-weight: bold;
    line-height: 14px;
    display: grid;
    justify-items: end;
  }

  .sw-name small {
    font-size: 9px;
    line-height: 8px;
  }

  .tray {
    margin: auto 11px 15px 6px;
    display: grid;
    grid-template-columns: 30px 30px;
    grid-auto-rows: 30px;
  }

  .tray button {
    display: grid;
    place-items: center;
  }

  .tray svg {
    width: 18px;
    height: 18px;
  }

  .clock {
    text-align: center;
    font-size: 14px;
    line-height: 22px;
  }

  .notify {
    height: 70px;
    display: grid;
    place-items: center;
    padding-bottom: 6px;
  }

  .notify svg {
    width: 20px;
    height: 20px;
  }
</style>
